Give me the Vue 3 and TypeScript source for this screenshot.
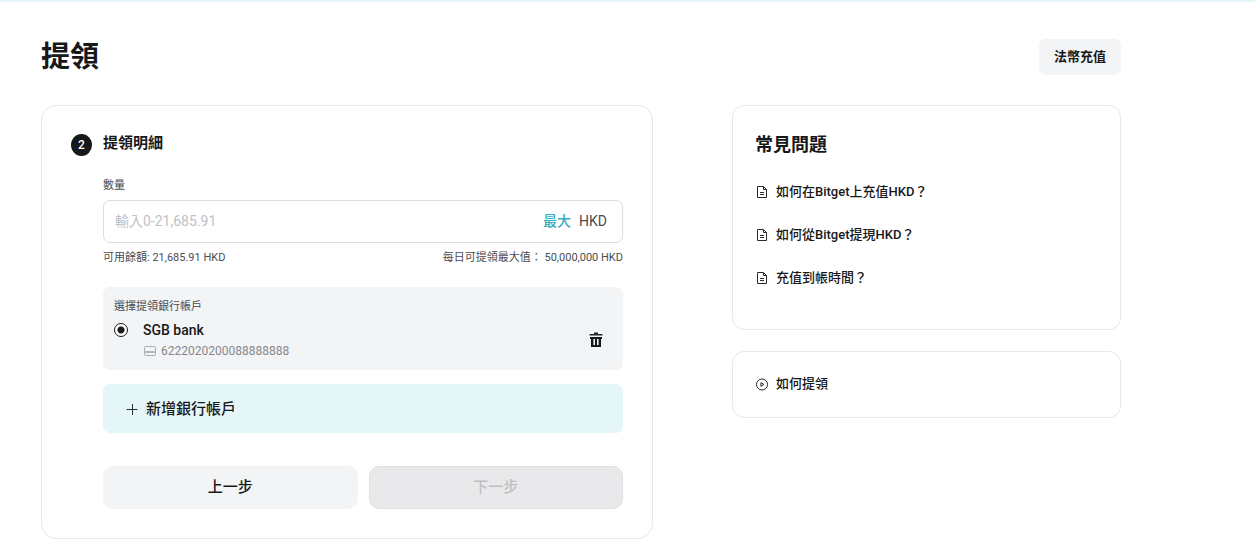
<script setup lang="ts">
import { ref } from 'vue'

interface Faq {
  id: number
  text: string
}

const amount = ref('')
const account = ref('sgb')
const faqs: Faq[] = [
  { id: 1, text: '如何在Bitget上充值HKD？' },
  { id: 2, text: '如何從Bitget提現HKD？' },
  { id: 3, text: '充值到帳時間？' },
]

function fillMax(): void {
  amount.value = '21685.91'
}
</script>

<template>
  <div class="page">
    <div class="wrap">
      <header class="head">
        <h1>提領</h1>
        <button type="button" class="deposit">法幣充值</button>
      </header>

      <div class="columns">
        <main class="card form-card">
          <div class="step">
            <span class="badge">2</span>
            <h2>提領明細</h2>
          </div>

          <form class="form" @submit.prevent>
            <label class="label" for="amount">數量</label>
            <div class="field">
              <input id="amount" v-model="amount" type="text" inputmode="decimal" placeholder="輸入0-21,685.91" />
              <button type="button" class="max" @click="fillMax">最大</button>
              <span class="currency">HKD</span>
            </div>
            <div class="hints">
              <span>可用餘額: 21,685.91 HKD</span>
              <span>每日可提領最大值： 50,000,000 HKD</span>
            </div>

            <section class="bank">
              <div class="bank-main">
                <p class="bank-title">選擇提領銀行帳戶</p>
                <div class="bank-row">
                  <input id="bank-sgb" v-model="account" type="radio" name="bank" value="sgb" />
                  <label for="bank-sgb">SGB bank</label>
                </div>
                <div class="bank-number">
                  <svg width="14" height="12" viewBox="0 0 14 12" fill="none" stroke="#a9abad">
                    <rect x="1.500" y="1.500" width="11" height="9" rx="1" />
                    <path d="M1 7h12" stroke-width="2" stroke="#b5b7b9" />
                  </svg>
                  <span>6222020200088888888</span>
                </div>
              </div>
              <button type="button" class="trash" aria-label="刪除">
                <svg width="14" height="16" viewBox="0 0 14 16">
                  <path d="M5 .4h4V2h4.500v1.600H.5V2H5z" fill="#242527" />
                  <path fill-rule="evenodd" d="M1 5h12v2h-1v8H2V7H1zM4 7v6h2V7zM8 7v6h2V7z" fill="#17181a" />
                  <path d="M4 7h1v6H4zM9 7h1v6H9z" fill="#17181a" opacity=".4" />
                </svg>
              </button>
            </section>

            <button type="button" class="add">
              <svg width="12" height="12" viewBox="0 0 12 12" stroke="#2b2f30" stroke-width="1" fill="none">
                <path d="M.5 6.5h11M6.5 1v11" />
              </svg>
              <span>新增銀行帳戶</span>
            </button>

            <div class="actions">
              <button type="button" class="prev">上一步</button>
              <button type="submit" class="next" disabled>下一步</button>
            </div>
          </form>
        </main>

        <aside class="side">
          <section class="card faq">
            <h2>常見問題</h2>
            <ul>
              <li v-for="faq in faqs" :key="faq.id">
                <a href="#" class="link">
                  <svg width="14" height="14" viewBox="0 0 14 14" fill="none" stroke="#2a2b2d">
                    <path d="M8.500 1.500H2.500v11h9V4.500z" />
                    <path d="M8.500 1.500v3h3M5 7.500h4M5 9.500h4" />
                  </svg>
                  <span>{{ faq.text }}</span>
                </a>
              </li>
            </ul>
          </section>

          <section class="card guide">
            <a href="#" class="link">
              <svg width="14" height="14" viewBox="0 0 14 14" fill="none" stroke="#2a2b2d">
                <circle cx="7" cy="7.500" r="5.500" />
                <path d="M5.900 5.700v3.600l3-1.800z" />
              </svg>
              <span>如何提領</span>
            </a>
          </section>
        </aside>
      </div>
    </div>
  </div>
</template>

<style>
body {
  margin: 0;
  background: #fff;
}
</style>

<style scoped>
* {
  box-sizing: border-box;
}
.page {
  border-top: 2px solid #e5f6f8;
  padding: 37px 41px 6px;
  font-family: Roboto, "Noto Sans CJK TC", sans-serif;
  color: #17181a;
}
.wrap {
  max-width: 1080px;
}
h1, h2, p, ul {
  margin: 0;
  padding: 0;
}
button, input {
  font-family: inherit;
  margin: 0;
}
button {
  border: 0;
  padding: 0;
  background: none;
  color: inherit;
  cursor: pointer;
}
svg {
  display: block;
  flex: none;
}
.head {
  display: flex;
  align-items: center;
  justify-content: space-between;
  height: 36px;
  margin-bottom: 30px;
}
h1 {
  font-size: 29px;
  line-height: 36px;
  font-weight: 700;
}
.deposit {
  height: 36px;
  padding: 0 15px 3px;
  border-radius: 7px;
  background: #f3f4f6;
  font-size: 13px;
  font-weight: 600;
}
.columns {
  display: grid;
  grid-template-columns: 612fr 389fr;
  gap: 79px;
  align-items: start;
}
.card {
  border: 1px solid #e8e8ea;
  border-radius: 12px;
}
.form-card {
  border-radius: 15px;
  padding: 26px 29px 29px;
}
.step {
  display: flex;
  align-items: flex-start;
  gap: 11px;
}
.badge {
  width: 21px;
  height: 22px;
  margin-top: 2px;
  border-radius: 50%;
  background: #17181a;
  color: #fff;
  font-size: 12px;
  line-height: 22px;
  font-weight: 500;
  text-align: center;
}
.step h2 {
  font-size: 15px;
  line-height: 22px;
  font-weight: 700;
}
.form {
  display: flex;
  flex-direction: column;
  margin-left: 32px;
}
.label {
  margin-top: 22px;
  font-size: 11px;
  line-height: 16px;
  color: #4a4c50;
}
.field {
  display: flex;
  align-items: center;
  height: 43px;
  margin-top: 6px;
  padding: 0 15px 2px 11px;
  border: 1px solid #dcdddf;
  border-radius: 7px;
  font-size: 14px;
}
.field input {
  flex: 1;
  min-width: 0;
  border: 0;
  padding: 0;
  outline: 0;
  background: none;
  font-size: 14px;
  line-height: 22px;
  color: #17181a;
}
.field input::placeholder {
  color: #c0c1c4;
  opacity: 1;
}
.max {
  margin-right: 8px;
  font-size: 14px;
  line-height: 22px;
  font-weight: 500;
  color: #31aebf;
}
.currency {
  line-height: 22px;
  color: #4a4c50;
}
.hints {
  display: flex;
  justify-content: space-between;
  margin-top: 7px;
  font-size: 11px;
  line-height: 16px;
  color: #4a4c50;
}
.bank {
  display: flex;
  align-items: center;
  justify-content: space-between;
  height: 83px;
  margin-top: 21px;
  padding: 0 20px 0 11px;
  border-radius: 7px;
  background: #f3f4f6;
}
.bank-title {
  font-size: 11px;
  line-height: 16px;
  color: #4a4c50;
}
.bank-row {
  display: flex;
  align-items: center;
  gap: 15px;
  margin-top: 4px;
  font-size: 14px;
  line-height: 22px;
  font-weight: 500;
}
.bank-row input {
  appearance: none;
  width: 14px;
  height: 14px;
  border: 1px solid #17181a;
  border-radius: 50%;
  background: #fff;
}
.bank-row input:checked {
  background: radial-gradient(circle, #17181a 3px, #fff 4px);
}
.bank-number {
  display: flex;
  align-items: center;
  gap: 4px;
  margin: 2px 0 0 29px;
  font-size: 12px;
  line-height: 16px;
  color: #86888c;
}
.trash {
  margin-top: 22px;
}
.add {
  display: flex;
  align-items: center;
  gap: 8px;
  height: 49px;
  margin-top: 14px;
  padding: 0 23px;
  border-radius: 7px;
  background: #e5f6f9;
  font-size: 15px;
  font-weight: 500;
}
.add span {
  padding-bottom: 3px;
}
.actions {
  display: grid;
  grid-template-columns: 1fr 1fr;
  gap: 11px;
  margin-top: 33px;
}
.actions button {
  height: 43px;
  padding-bottom: 5px;
  border-radius: 10px;
  background: #f3f4f6;
  font-size: 15px;
  font-weight: 500;
}
.actions .next {
  border: 1px solid #dfe0e2;
  background: #e9e9eb;
  color: #bebfc2;
  cursor: default;
}
.side {
  display: flex;
  flex-direction: column;
  gap: 21px;
}
.faq {
  padding: 26px 22px 40px;
}
.faq h2 {
  font-size: 18px;
  line-height: 26px;
  font-weight: 700;
}
.faq ul {
  display: flex;
  flex-direction: column;
  gap: 21px;
  margin-top: 23px;
  list-style: none;
}
.link {
  display: flex;
  align-items: center;
  gap: 7px;
  font-size: 13px;
  line-height: 22px;
  font-weight: 500;
  color: inherit;
  text-decoration: none;
}
.guide {
  padding: 21px 22px 22px;
}
</style>
